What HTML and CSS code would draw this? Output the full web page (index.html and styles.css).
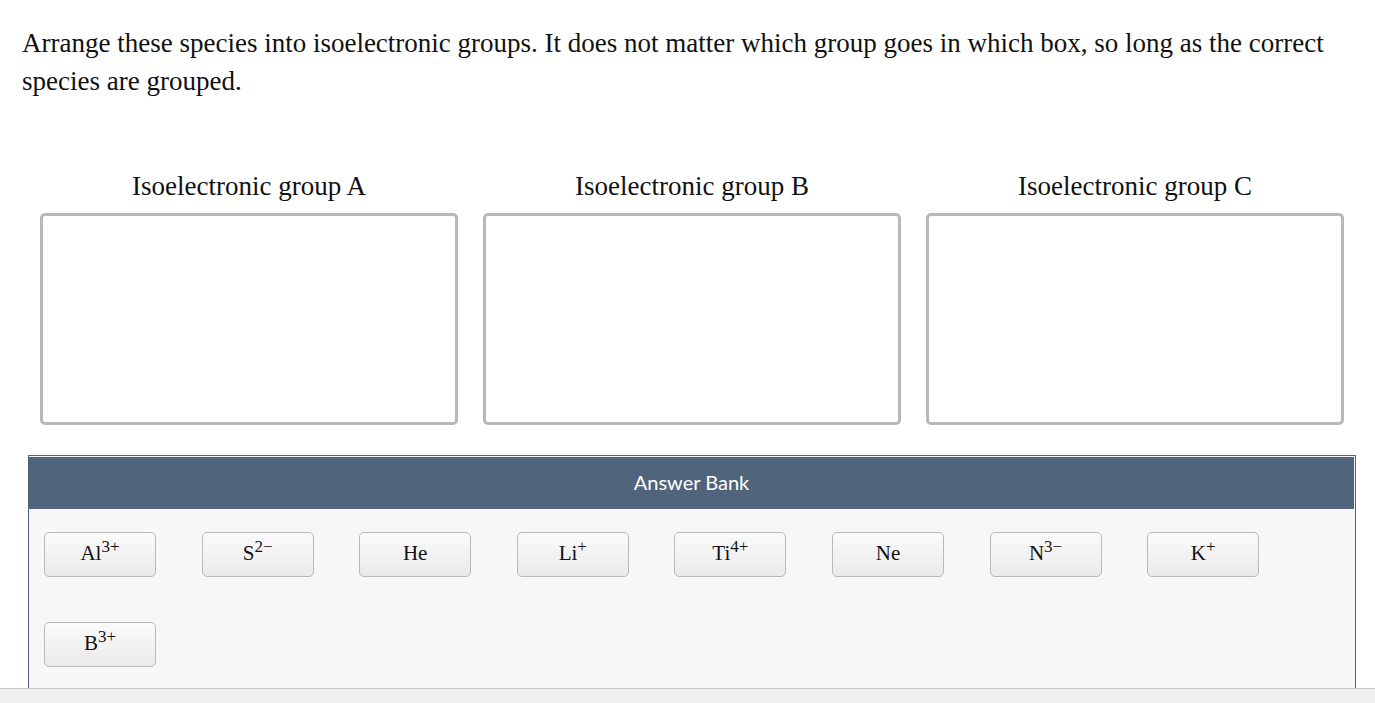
FILE: index.html
```html
<!DOCTYPE html>
<html lang="en">
<head>
    <meta charset="UTF-8">
    <meta name="viewport" content="width=device-width, initial-scale=1.0">
    <title>Isoelectronic Groups</title>
    <link rel="stylesheet" href="styles.css">
</head>
<body>
    <div class="page">
        <p class="question">Arrange these species into isoelectronic groups. It does not matter which group goes in which box, so long as the correct species are grouped.</p>

        <!-- Drop targets -->
        <div class="groups">
            <div class="group">
                <div class="group-title">Isoelectronic group A</div>
                <div class="drop-box"></div>
            </div>
            <div class="group">
                <div class="group-title">Isoelectronic group B</div>
                <div class="drop-box"></div>
            </div>
            <div class="group">
                <div class="group-title">Isoelectronic group C</div>
                <div class="drop-box"></div>
            </div>
        </div>

        <!-- Answer bank -->
        <div class="bank">
            <div class="bank-header">Answer Bank</div>
            <div class="bank-items">
                <div class="chip">Al<sup>3+</sup></div>
                <div class="chip">S<sup>2&minus;</sup></div>
                <div class="chip">He</div>
                <div class="chip">Li<sup>+</sup></div>
                <div class="chip">Ti<sup>4+</sup></div>
                <div class="chip">Ne</div>
                <div class="chip">N<sup>3&minus;</sup></div>
                <div class="chip">K<sup>+</sup></div>
                <div class="chip">B<sup>3+</sup></div>
            </div>
        </div>
    </div>

    <div class="footer-bar"></div>
</body>
</html>
```

FILE: styles.css
```css
body {
    margin: 0;
    padding: 0;
    background-color: #fff;
    color: #111;
    font-family: "Liberation Serif", "Times New Roman", serif;
}
.page {
    width: 1340px;
    padding-left: 22px;
}
.question {
    margin: 24px 0 0;
    font-size: 27px;
    line-height: 38px;
}
.groups {
    display: flex;
    gap: 25px;
    margin: 71px 18px 0;
}
.group {
    flex: 1;
}
.group-title {
    text-align: center;
    font-size: 27px;
    line-height: 30px;
    margin-bottom: 12px;
}
.drop-box {
    height: 206px;
    border: 3px solid #b8b8b8;
    border-radius: 5px;
    background-color: #fff;
}
.bank {
    margin: 30px 6px 0;
    border: 1px solid #50647c;
    background-color: #f7f7f7;
    height: 260px;
}
.bank-header {
    margin: 1px 1px 0 0;
    height: 52px;
    line-height: 50px;
    background-color: #50647c;
    color: #fff;
    text-align: center;
    font-family: Lato, "Liberation Sans", sans-serif;
    font-size: 20px;
}
.bank-items {
    display: flex;
    flex-wrap: wrap;
    gap: 45px 45.6px;
    padding: 23px 15px;
}
.chip {
    box-sizing: border-box;
    width: 112px;
    height: 45px;
    border: 1px solid #b9b9b9;
    border-radius: 5px;
    background: linear-gradient(#fbfbfb, #e9e9e9);
    text-align: center;
    font-size: 21px;
    line-height: 40px;
}
.chip sup {
    font-size: 17px;
    line-height: 0;
    vertical-align: 8px;
}
.footer-bar {
    position: fixed;
    left: 0;
    right: 0;
    bottom: 0;
    height: 14px;
    border-top: 1px solid #cacaca;
    background-color: #f0f0f0;
}
```
